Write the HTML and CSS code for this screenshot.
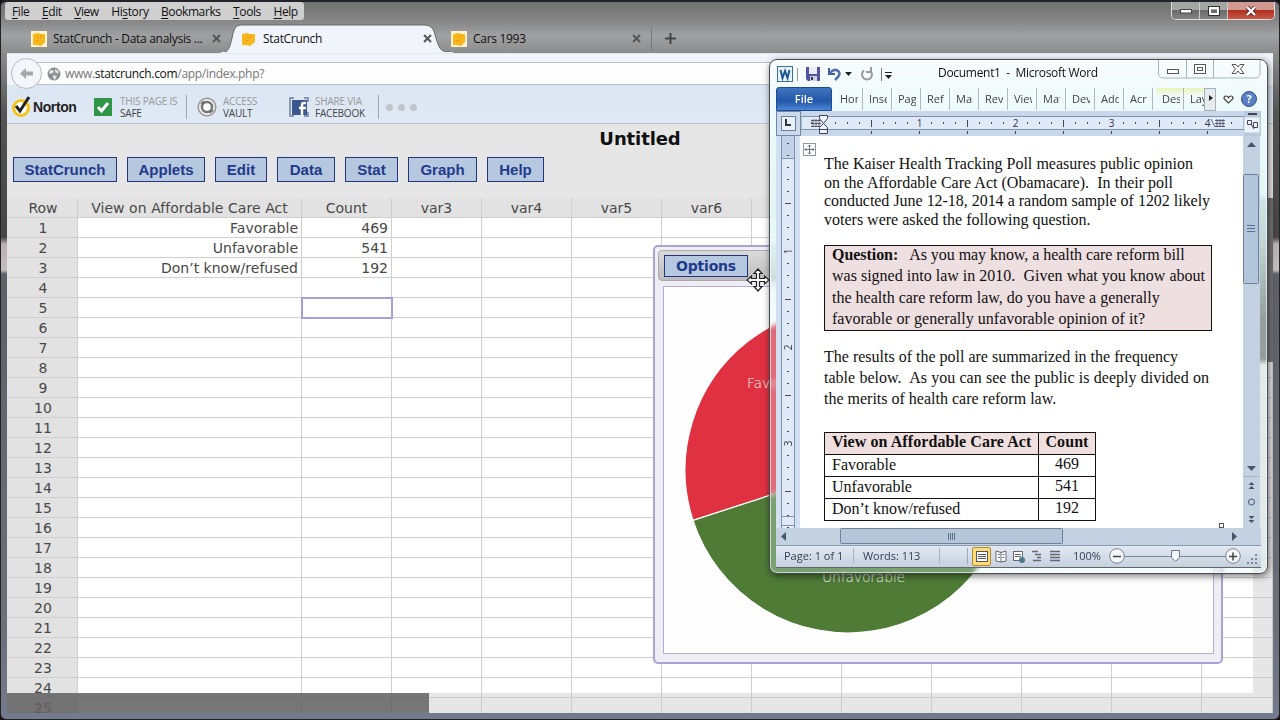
FILE: index.html
```html
<!DOCTYPE html>
<html lang="en">
<head>
  <meta charset="UTF-8">
  <title>StatCrunch</title>
  <link rel="stylesheet" href="styles.css">
</head>
<body>
  <div class="browser">
    <!-- Menu bar -->
    <div class="titlebar">
      <div class="menu">
        <span><u>F</u>ile</span><span><u>E</u>dit</span><span><u>V</u>iew</span><span>Hi<u>s</u>tory</span><span><u>B</u>ookmarks</span><span><u>T</u>ools</span><span><u>H</u>elp</span>
      </div>
      <div class="win-buttons">
        <div class="wb wb-min"><svg width="12" height="6"><rect x=".5" y="1.5" width="11" height="3.5" fill="#fff" stroke="#444"/></svg></div>
        <div class="wb wb-max"><svg width="12" height="10"><rect x="1.5" y="1.5" width="9" height="7" fill="none" stroke="#333" stroke-width="3"/><rect x="2" y="2" width="8" height="6" fill="none" stroke="#fff" stroke-width="2"/></svg></div>
        <div class="wb wb-close"><svg width="12" height="10"><path d="M2 1l8 8M10 1l-8 8" stroke="#522" stroke-width="4"/><path d="M2 1l8 8M10 1l-8 8" stroke="#fff" stroke-width="2.4"/></svg></div>
      </div>
    </div>

    <!-- Tabs -->
    <div class="tabs">
      <div class="tab tab-first">
        <svg class="fav" width="16" height="16"><rect width="16" height="16" fill="#fff3cf"/><path d="M2 3l5-1 3 1 4 0v8l-4 4-4-1-4 0z" fill="#f8b71c"/><path d="M6 5l2 2M10 4v3M5 10l3-1" stroke="#e79a12"/></svg>
        <span>StatCrunch - Data analysis ...</span>
        <svg class="x" width="9" height="9"><path d="M1 1l7 7M8 1l-7 7" stroke="#555" stroke-width="2"/></svg>
      </div>
      <div class="tab-active">
        <svg class="tab-shape" width="232" height="29"><path d="M0 29C8 29 9 22 11 14C13 5 14 1 21 1H203C212 1 213 7 215 14C218 23 219 28 228 28L232 29z" fill="#f1f5fb" stroke="#666"/><path d="M0 29h232" stroke="#f1f5fb" stroke-width="2"/></svg>
        <svg class="fav" width="16" height="16"><path d="M1 3l5-1 3 1 5 0v8l-5 4-4-1-4 0z" fill="#f8b71c"/><path d="M6 5l2 2M10 4v3M5 10l3-1" stroke="#e79a12"/></svg>
        <span>StatCrunch</span>
        <svg class="x" width="9" height="9"><path d="M1 1l7 7M8 1l-7 7" stroke="#555" stroke-width="2"/></svg>
      </div>
      <div class="tab tab-last">
        <svg class="fav" width="16" height="16"><rect width="16" height="16" fill="#fff3cf"/><path d="M2 3l5-1 3 1 4 0v8l-4 4-4-1-4 0z" fill="#f8b71c"/><path d="M6 5l2 2M10 4v3M5 10l3-1" stroke="#e79a12"/></svg>
        <span>Cars 1993</span>
        <svg class="x" width="9" height="9"><path d="M1 1l7 7M8 1l-7 7" stroke="#555" stroke-width="2"/></svg>
      </div>
      <svg class="plus" width="11" height="11"><path d="M5.500 0v11M0 5.500h11" stroke="#444" stroke-width="2"/></svg>
    </div>

    <!-- Address bar -->
    <div class="nav">
      <div class="back"><svg width="15" height="13"><path d="M1 6.500L7 1V4.500H14V8.500H7V12z" fill="#a5a8ac"/></svg></div>
      <div class="url">
        <svg width="14" height="14"><circle cx="7" cy="7" r="6.500" fill="#8b8f94"/><path d="M3 3l3 0 1 2-3 2-2-1zM8 2l4 2-1 3-3-2zM6 8l4 1-2 4-2-2z" fill="#dfe2e5"/></svg>
        <span>www.<b>statcrunch.com</b>/app/index.php?</span>
        <i class="drop"></i>
      </div>
    </div>

    <!-- Norton toolbar -->
    <div class="norton">
      <svg class="check" width="22" height="22"><circle cx="10" cy="12" r="7.500" fill="#fff" stroke="#f1c21b" stroke-width="3"/><path d="M5 10l4 5L18 1" fill="none" stroke="#222" stroke-width="3"/></svg>
      <b class="brand">Norton</b>
      <svg class="safe" width="18" height="18"><rect width="18" height="18" fill="#2f9547"/><path d="M4 9l3.500 4L14 5" fill="none" stroke="#fff" stroke-width="3"/></svg>
      <div class="nt nt-page"><span>THIS PAGE IS</span><em>SAFE</em></div>
      <svg class="vault" width="20" height="20"><circle cx="10" cy="10" r="8.800" fill="#eee" stroke="#999" stroke-width="1.500"/><circle cx="10" cy="10" r="5" fill="#fff" stroke="#777" stroke-width="2.500"/><path d="M4 7l3-3M13 16l3-3" stroke="#666" stroke-width="1.500"/></svg>
      <div class="nt nt-vault"><span>ACCESS</span><em>VAULT</em></div>
      <svg class="fb" width="20" height="20"><path d="M5 1H1v18h4M15 1h4v4M19 15v4h-4" fill="none" stroke="#6e7da0" stroke-width="1.500"/><rect x="3" y="3" width="15" height="15" fill="#3b5790"/><path d="M17 6h-2q-2 0-2 2v10M10 11h7" fill="none" stroke="#fff" stroke-width="2.400"/></svg>
      <div class="nt nt-fb"><span>SHARE VIA</span><em>FACEBOOK</em></div>
      <div class="dots"><i></i><i></i><i></i></div>
    </div>

    <!-- StatCrunch page -->
    <div class="page">
      <h1>Untitled</h1>
      <div class="buttons">
        <button class="b1">StatCrunch</button>
        <button class="b2">Applets</button>
        <button class="b3">Edit</button>
        <button class="b4">Data</button>
        <button class="b5">Stat</button>
        <button class="b6">Graph</button>
        <button class="b7">Help</button>
      </div>
      <table class="sheet">
        <colgroup id="cols"></colgroup>
        <thead><tr id="head"></tr></thead>
        <tbody id="rows"></tbody>
      </table>
      <div class="vtrack"></div>
      <div class="vthumb"></div>
      <div class="htrack"></div>
      <div class="hthumb"></div>
    </div>
  </div>

  <!-- Pie chart window -->
  <div class="dialog">
    <div class="dialog-bar"><button>Options</button></div>
    <div class="chart">
      <svg width="549" height="366">
        <g stroke="#fff" stroke-width="1.200">
          <path d="M184 183H347A163 163 0 0 0 271.600 45.500z" fill="#3b6fb6"/>
          <path d="M184 183L271.600 45.500A163 163 0 0 0 29 233.400z" fill="#e03142"/>
          <path d="M184 183L29 233.400A163 163 0 0 0 347 183z" fill="#4f7b37"/>
        </g>
        <text x="83" y="101">Favorable</text>
        <text x="158" y="295">Unfavorable</text>
      </svg>
    </div>
  </div>

  <!-- Word window -->
  <div class="word">
    <div class="word-title">
      <svg width="120" height="22">
        <rect x="1.500" y="3.500" width="15" height="15" fill="#eaf3fb" stroke="#3c6d9f"/>
        <path d="M4.500 7l2 8 2.500-7 2.500 7 2-8" fill="none" stroke="#1d5792" stroke-width="2"/>
        <path d="M21.500 5v13" stroke="#999"/>
        <path d="M30 4h14v14H32l-2-2z" fill="#5553a0"/><rect x="33" y="4" width="8" height="7" fill="#e9edf7"/><rect x="34" y="13" width="7" height="5" fill="#ccd2e6"/><rect x="35" y="14" width="2" height="3" fill="#334"/>
        <path d="M53 5v6h6" fill="none" stroke="#3d5f9c" stroke-width="2"/><path d="M54 10q4-5 8-2t-3 9" fill="none" stroke="#5572a8" stroke-width="2.500"/>
        <path d="M69 9h7l-3.500 4z" fill="#222"/>
        <path d="M94 7.500a5 5 0 1 1-6 0M95 4v5h-5" fill="none" stroke="#999" stroke-width="2"/>
        <path d="M105.500 5v13" stroke="#777"/><path d="M109 9.500h7" stroke="#222"/><path d="M109 12h7l-3.500 4z" fill="#222"/>
      </svg>
      <span class="caption">Document1&nbsp; -&nbsp; Microsoft Word</span>
      <div class="word-win">
        <svg width="103" height="19"><path d="M.5 0v13q0 5 5 5H97q5 0 5-5V0M28.500 0v18M55.500 0v18" fill="none" stroke="#a8b4bb"/><rect x="9.500" y="9.500" width="11" height="4" fill="#fff" stroke="#555"/><rect x="36.500" y="4.500" width="11" height="9" fill="#fff" stroke="#555"/><rect x="39.500" y="7.500" width="5" height="3" fill="#fff" stroke="#555"/><path d="M74 4.500h4l2 2.500 2-2.500h4L82.500 9l3.500 4.500h-4l-2-2.500-2 2.500h-4L77.500 9z" fill="#fff" stroke="#555"/></svg>
      </div>
    </div>
    <div class="ribbon">
      <div class="file">File</div>
      <div class="rt"><span>Home</span></div><div class="rt"><span>Insert</span></div><div class="rt"><span>Page</span></div><div class="rt"><span>Ref</span></div><div class="rt rt-ma"><span>Mailings</span></div><div class="rt"><span>Rev</span></div><div class="rt"><span>View</span></div><div class="rt rt-ma"><span>Math</span></div><div class="rt"><span>Dev</span></div><div class="rt"><span>Add</span></div><div class="rt"><span>Acr</span></div>
      <div class="rt rt-des"><span>Des</span></div><div class="rt rt-lay"><span>Lay</span></div>
      <div class="more"></div>
      <svg class="heart" width="11" height="9"><path d="M5.500 8L1 3.500Q1 1 3 1t2.500 2.500Q6 1 8 1t2 2.500z" fill="#fff" stroke="#444" stroke-width="1.200"/></svg>
      <div class="help">?</div>
    </div>
    <div class="word-body">
      <div class="hruler">
        <svg id="hruler" width="485" height="25">
          <rect width="485" height="25" fill="#c8d8ea"/>
          <rect x=".5" y=".5" width="24" height="24" fill="#cbd9ea" stroke="#7088a6"/>
          <rect x="5.500" y="5.500" width="14" height="14" fill="#e8f0f8" stroke="#6a80a0"/>
          <path d="M10 8v6h5" fill="none" stroke="#334" stroke-width="2"/>
          <rect x="25" y="5.500" width="443" height="13" fill="#dfe9f7" stroke="#7e93ad"/>
        </svg>
      </div>
      <div class="middle">
        <svg id="vruler" width="24" height="392">
          <rect width="24" height="392" fill="#d3e0f1"/>
          <rect x="5.500" y="-1" width="13" height="400" fill="#dfe9f7" stroke="#7e93ad"/>
          <path d="M6 0h12v22H6z" fill="#c1d1e6"/><path d="M6 22.500h12M6 380.500h12M6 389.500h12" stroke="#7e93ad"/>
        </svg>
        <div class="doc">
          <svg class="anchor" width="13" height="13"><rect x=".5" y=".5" width="12" height="12" fill="#fff" stroke="#8b98a8"/><path d="M6.500 2v9M2 6.500h9M5 3.500l1.500-1.500L8 3.500M5 9.500L6.500 11 8 9.500M3.500 5L2 6.500 3.500 8M9.500 5L11 6.500 9.500 8" fill="none" stroke="#456" stroke-width=".8"/></svg>
          <div class="para p1">
            <p class="w369">The Kaiser Health Tracking Poll measures public opinion</p>
            <p class="w349">on the Affordable Care Act (Obamacare).&nbsp; In their poll</p>
            <p class="w386">conducted June 12-18, 2014 a random sample of 1202 likely</p>
            <p class="w265">voters were asked the following question.</p>
          </div>
          <div class="para question">
            <p class="w352"><b>Question:</b>&nbsp;&nbsp; As you may know, a health care reform bill</p>
            <p class="w373">was signed into law in 2010.&nbsp; Given what you know about</p>
            <p class="w327">the health care reform law, do you have a generally</p>
            <p class="w313">favorable or generally unfavorable opinion of it?</p>
          </div>
          <div class="para p2">
            <p class="w354">The results of the poll are summarized in the frequency</p>
            <p class="w385">table below.&nbsp; As you can see the public is deeply divided on</p>
            <p class="w232">the merits of health care reform law.</p>
          </div>
          <table class="freq">
            <tr><th>View on Affordable Care Act</th><th>Count</th></tr>
            <tr><td>Favorable</td><td>469</td></tr>
            <tr><td>Unfavorable</td><td>541</td></tr>
            <tr><td>Don’t know/refused</td><td>192</td></tr>
          </table>
          <i class="handle"></i>
        </div>
        <div class="vscroll">
          <svg width="17" height="392">
            <path d="M4 11h9l-4.500-5z" fill="#44566e"/>
            <rect x=".5" y="38.500" width="15" height="109" rx="1" fill="#b3c5da" stroke="#6d819c"/>
            <path d="M4 89.500h8M4 92.500h8M4 95.500h8" stroke="#5d7089"/>
            <path d="M4 330h9l-4.500 5z" fill="#44566e"/><path d="M0 340.500h17" stroke="#a5b4c6"/>
            <path d="M5.500 349l3-3 3 3zM5.500 353l3-3 3 3z" fill="#44566e"/>
            <circle cx="8.500" cy="366" r="3" fill="none" stroke="#44566e"/>
            <path d="M5.500 380l3 3 3-3zM5.500 384l3 3 3-3z" fill="#44566e"/>
          </svg>
        </div>
      </div>
      <div class="hscroll">
        <svg width="485" height="17">
          <path d="M10 4v9L5 8.500z" fill="#44566e"/>
          <rect x="64.500" y=".5" width="222" height="15" rx="1" fill="#b5c6d9" stroke="#6d819c"/>
          <path d="M172.500 5v7M174.500 5v7M176.500 5v7M178.500 5v7" stroke="#5d7089"/>
          <path d="M456 4v9l5-4.500z" fill="#44566e"/>
        </svg>
      </div>
      <div class="status">
        <span class="s-page">Page: 1 of 1</span>
        <span class="s-words">Words: 113</span>
        <svg class="views" width="98" height="20">
          <path d="M.5 2v16" stroke="#99a7ba"/>
          <rect x="5.500" y="1.500" width="18" height="18" rx="1.500" fill="#fbdc7c" stroke="#b78a2c"/>
          <rect x="9.500" y="5.500" width="11" height="10" fill="#fff" stroke="#555"/><path d="M11 8.500h8M11 10.500h8M11 12.500h8" stroke="#555"/>
          <path d="M29 5l5 1.500 5-1.500v10l-5 1-5-1zM34 6v10M31 8.500h2M31 11.500h2M35.500 8.500h2M35.500 11.500h2" fill="#fff" stroke="#667"/>
          <rect x="46.500" y="5.500" width="9" height="9" fill="#fff" stroke="#667"/><path d="M48 8.500h6M48 10.500h6" stroke="#667"/><circle cx="55" cy="14" r="3" fill="#4a7a8a"/>
          <path d="M65 5.500h6M68 8.500h6M70 11.500h4M66 14.500h8M83 5.500h10M83 8.500h10M83 11.500h10M83 14.500h10" stroke="#667" stroke-width="1.300"/>
        </svg>
        <span class="zoom">100%</span>
        <svg class="slider" width="132" height="20">
          <path d="M15 10.500h109" stroke="#7a8798"/>
          <circle cx="8" cy="10" r="7.300" fill="#f4f6f9" stroke="#7a8491"/><path d="M4 10.500h8" stroke="#444" stroke-width="1.500"/>
          <circle cx="124" cy="10" r="7.300" fill="#f4f6f9" stroke="#7a8491"/><path d="M120 10.500h8M124 6.500v8" stroke="#444" stroke-width="1.500"/>
          <path d="M62.500 4.500h8v7l-4 4-4-4z" fill="#f4f6f9" stroke="#6f7a88"/>
        </svg>
        <svg class="grip" width="12" height="12"><path d="M9 1h2M9 5h2M9 9h2M5 5h2M5 9h2M1 9h2" stroke="#7a8798" stroke-width="2"/></svg>
      </div>
    </div>
  </div>

  <svg class="cursor" width="24" height="24"><path d="M12 1l4 4.500h-2.500v5h5V8L23 12l-4.500 4v-2.500h-5v5H16L12 23l-4-4.500h2.500v-5h-5V16L1 12l4.500-4v2.500h5v-5H8z" fill="#fff" stroke="#222" stroke-width="1.200"/></svg>

  <script>
    const data = [["Favorable", 469], ["Unfavorable", 541], ["Don’t know/refused", 192]];
    const heads = ["Row", "View on Affordable Care Act", "Count", "var3", "var4", "var5", "var6", "", "", "", "", "", ""];

    document.getElementById("cols").innerHTML = heads.map(() => "<col>").join("");
    document.getElementById("head").innerHTML = heads.map(h => `<th>${h}</th>`).join("");

    let html = "";
    for (let r = 1; r <= 25; r++) {
      html += `<tr><th>${r}</th>`;
      for (let c = 0; c < heads.length - 1; c++) {
        const value = data[r - 1] && c < 2 ? data[r - 1][c] : "";
        html += `<td${r === 5 && c === 1 ? ' class="selected"' : ""}>${value}</td>`;
      }
      html += "</tr>";
    }
    document.getElementById("rows").innerHTML = html;

    // Ruler marks: one inch is 96px, a mark every eighth
    let h = "", v = "";
    for (let i = -1; i <= 34; i++) {
      const x = 47.5 + i * 12;
      if (i % 8 === 0 && i > 0) {
        h += `<text x="${x}" y="16">${i / 8}</text>`;
      } else if (i !== 0 && i !== 33 && x < 466) {
        h += i % 4 === 0 ? `<path d="M${x} 9v7"/>` : `<path d="M${x} 11v2"/>`;
      }
      if (i > 0 && i % 4 === 0) h += `<path d="M${x} 20v3"/>`;
    }
    h += '<path d="M37 8v8M40 8v8M43 8v8M35 9.500h10M35 12.500h10M35 15.500h10" stroke-width=".8"/>';
    h += '<path d="M43.500 4.500h8v3l-4 5-4-5zM47.500 12.500l4 4v6h-8v-6zM43.500 18.500h8" fill="#edf3fa" stroke="#667a94"/>';
    h += '<path d="M435 8l4 8" stroke-width=".8"/><path d="M441 8v8M444 8v8M447 8v8M439 9.500h10M439 12.500h10M439 15.500h10" stroke-width=".8"/>';
    h += '<rect x="468" y="0" width="17" height="25" fill="#b9c9dc" stroke="none"/><path d="M472 3h9" stroke-width="2"/><rect x="468.500" y="6.500" width="15" height="15" fill="#edf3fa"/><path d="M471.500 9.500h4v4h-4zM475 13l3 5M477.500 11.500h4v5h-4z" fill="none"/>';
    for (let i = -1; i < 32; i++) {
      const y = 19.500 + i * 12;
      if (i > 0 && i % 8 === 0) v += `<text transform="translate(15.500 ${y}) rotate(-90)">${i / 8}</text>`;
      else if (y > 0) v += i > 0 && i % 4 === 0 ? `<path d="M9 ${y}h6"/>` : `<path d="M11 ${y}h2"/>`;
    }
    document.getElementById("hruler").innerHTML += `<g class="marks">${h}</g>`;
    document.getElementById("vruler").innerHTML += `<g class="marks">${v}</g>`;
  </script>
</body>
</html>
```
FILE: styles.css
```css
* {
  box-sizing: border-box;
  margin: 0;
  padding: 0;
}
body {
  width: 1280px;
  height: 720px;
  overflow: hidden;
  position: relative;
  background: #111;
  font-family: "Open Sans", "Noto Sans", sans-serif;
  font-size: 12px;
  color: #111;
}
svg {
  display: block;
  flex: none;
}
.browser {
  height: 720px;
  display: flex;
  flex-direction: column;
  padding: 0 6px 6px;
  border: 1px solid #222;
  border-top: 2px solid #23232c;
  border-radius: 6px;
  background: linear-gradient(#707070, #858585 18px, #a0a1a3 34px, #8c8c8c 51px, #555 110px, #444 235px, #b9b0b4 242px, #c5bfc2 268px, #5d6066 272px, #6d717c 640px, #747b8c);
}

/* Menu bar and window buttons */
.titlebar {
  display: flex;
  justify-content: space-between;
  height: 22px;
  margin: 0 -6px;
}
.menu {
  display: flex;
  align-items: center;
  gap: 12.5px;
  width: 299px;
  height: 18px;
  margin-left: 4px;
  padding-left: 7px;
  background: #cfcfcf;
  border-radius: 3px;
  white-space: nowrap;
  letter-spacing: -0.4px;
}
.menu u {
  text-underline-offset: 2px;
}
.win-buttons {
  display: flex;
  height: 18px;
  margin-right: 4px;
  border: 1px solid #ddd;
  border-top: 0;
  border-radius: 0 0 5px 5px;
  overflow: hidden;
}
.wb {
  display: flex;
  align-items: center;
  justify-content: center;
  width: 28px;
  border-right: 1px solid #ccc;
  background: linear-gradient(#a5a5a5 45%, #6a6a6a 50%, #858585);
}
.wb-close {
  width: 46px;
  border: 0;
  background: linear-gradient(#d09a90 45%, #b03020 50%, #c85848);
}

/* Tabs */
.tabs {
  display: flex;
  align-items: center;
  height: 29px;
  padding-left: 24px;
}
.tab,
.tab-active {
  display: flex;
  align-items: center;
  height: 29px;
  white-space: nowrap;
  letter-spacing: -0.3px;
}
.tab .x,
.tab-active .x {
  margin-left: auto;
}
.tab span,
.tab-active span {
  margin-left: 6px;
}
.tab-first {
  width: 190px;
}
.tab-active {
  position: relative;
  width: 198px;
  margin-left: 20px;
  padding-right: 7px;
}
.tab-active > * {
  position: relative;
}
.tab-active .tab-shape {
  position: absolute;
  left: -20px;
  top: 0;
}
.tab-last {
  width: 201px;
  margin-left: 12px;
  height: 24px;
  padding-right: 10px;
  border-right: 1px solid #777;
}
.plus {
  margin-left: 13px;
}

/* Address bar */
.nav {
  display: flex;
  align-items: center;
  height: 32px;
  padding: 9px 0 0 4px;
  background: #f1f5fb;
  border-top: 1px solid #e4e8ee;
}
.back {
  display: flex;
  align-items: center;
  justify-content: center;
  flex: none;
  width: 31px;
  height: 31px;
  margin: -5px -9px -4px 0;
  border: 1px solid #b5bbc4;
  border-radius: 50%;
  background: #f3f6fa;
  z-index: 1;
}
.url {
  display: flex;
  align-items: center;
  width: 900px;
  height: 23px;
  margin-top: -1px;
  padding-left: 13px;
  gap: 4px;
  border: 1px solid #b9c2cc;
  background: #fdfdfe;
  color: #777;
  letter-spacing: -0.3px;
}
.url span {
  width: 202px;
  white-space: nowrap;
}
.url b {
  color: #111;
  font-weight: 500;
}
.drop {
  margin-left: 502px;
  border: 4px solid transparent;
  border-top: 5px solid #888;
}

/* Norton toolbar */
.norton {
  display: flex;
  align-items: center;
  height: 39px;
  padding-left: 4px;
  background: linear-gradient(#dbe6f3, #e0e9f4);
  border-bottom: 1px solid #b9c6d6;
  line-height: 12px;
  font-size: 10px;
}
.norton > * {
  margin-top: 6px;
}
.norton .brand {
  width: 44px;
  margin-right: 17px;
  font: bold 14px "Liberation Sans", sans-serif;
  letter-spacing: -0.4px;
  color: #222;
}
.nt {
  height: 24px;
  letter-spacing: -0.2px;
}
.nt span,
.nt em {
  display: block;
  font-style: normal;
  white-space: nowrap;
  color: #444;
}
.nt span {
  color: #999;
}
.nt-page {
  margin-left: 8px;
  width: 67px;
  border-right: 1px solid #9aa7b8;
}
.vault {
  margin-left: 10px;
}
.nt-vault {
  margin-left: 6px;
  width: 66px;
}
.nt-fb {
  margin-left: 6px;
  width: 64px;
  border-right: 1px solid #9aa7b8;
}
.dots {
  display: flex;
  gap: 5px;
  margin-left: 7px;
}
.dots i {
  width: 7px;
  height: 7px;
  border-radius: 50%;
  background: #c2c6cc;
}

/* StatCrunch page */
.page {
  position: relative;
  flex: 1;
  min-height: 0;
  overflow: hidden;
  background: #e6e6e6;
}
h1 {
  height: 33px;
  padding-top: 4px;
  font: bold 18px/22px "DejaVu Sans", sans-serif;
  letter-spacing: -0.1px;
  text-align: center;
}
.buttons {
  display: flex;
  gap: 10px;
  padding-left: 6px;
  height: 41px;
}
button {
  height: 25px;
  border: 1px solid #23357f;
  background: #b6c8df;
  color: #213a8c;
  font: bold 15px "Liberation Sans", sans-serif;
  white-space: nowrap;
}
.b1 { width: 104px; }
.b2 { width: 78px; }
.b3 { width: 52px; }
.b4 { width: 58px; }
.b5 { width: 53px; }
.b6 { width: 69px; }
.b7 { width: 57px; }
.sheet {
  table-layout: fixed;
  border-collapse: separate;
  border-spacing: 0;
  width: 1266px;
  font: 14px/18px "DejaVu Sans", sans-serif;
  color: #484848;
}
.sheet th,
.sheet td {
  height: 20px;
  padding-top: 1px;
  border-right: 1px solid #cfcfcf;
  border-bottom: 1px solid #cfcfcf;
  white-space: nowrap;
}
.sheet th {
  background: #e2e2e2;
  font-weight: normal;
  text-align: center;
}
.sheet thead th:nth-child(2) {
  letter-spacing: 0.05px;
}
.sheet th:first-child {
  padding-left: 2px;
}
.sheet td {
  background: #fff;
  padding-right: 3px;
  text-align: right;
}
.sheet col { width: 90px; }
.sheet col:first-child { width: 71px; }
.sheet col:nth-child(2) { width: 224px; }
.sheet col:last-child { width: 71px; }
.sheet td.selected {
  outline: 2px solid #a79fdc;
  outline-offset: -1px;
}
.vtrack,
.htrack,
.vthumb,
.hthumb {
  position: absolute;
  background: rgba(200, 200, 200, 0.45);
}
.vtrack {
  right: 0;
  top: 74px;
  bottom: 20px;
  width: 20px;
}
.htrack {
  left: 0;
  right: 0;
  bottom: 0;
  height: 20px;
}
.vthumb,
.hthumb {
  background: rgba(80, 80, 80, 0.75);
}
.vthumb {
  right: 0;
  top: 74px;
  width: 20px;
  height: 164px;
}
.hthumb {
  left: 0;
  bottom: 0;
  width: 422px;
  height: 20px;
}

/* Chart window */
.dialog {
  position: absolute;
  left: 653px;
  top: 245px;
  width: 570px;
  height: 419px;
  padding: 3px 7px 7px 8px;
  border: 2px solid #a9a2d6;
  border-radius: 5px;
  background: #efeef4;
}
.dialog-bar {
  height: 31px;
  margin: 0 -5px 5px;
  padding: 4px 5px;
  border: 1px solid #aaa;
  border-radius: 4px;
  background: linear-gradient(#dadada, #bdbdbd);
}
.dialog-bar button {
  display: block;
  width: 84px;
  height: 22px;
  font: bold 14px "DejaVu Sans", sans-serif;
  letter-spacing: -0.2px;
}
.chart {
  height: 368px;
  border: 1px solid #b3add9;
  background: #fefefe;
}
.chart text {
  fill: #eef1ea;
  font: 200 14px "DejaVu Sans", sans-serif;
  letter-spacing: -0.2px;
}

/* Word window */
.word {
  position: absolute;
  left: 769px;
  top: 59px;
  width: 499px;
  height: 515px;
  padding: 0 6px 6px;
  border: 1px solid #454b4e;
  border-radius: 8px;
  background: linear-gradient(#f8fcfd, #ecfafb 60px, rgba(220, 248, 248, 0.75) 180px, rgba(220, 248, 248, 0.3) 260px);
  backdrop-filter: blur(2px);
  box-shadow: inset 0 0 0 1px rgba(255, 255, 255, 0.6), 1px 2px 7px rgba(0, 0, 0, 0.55);
}
.word-title {
  display: flex;
  height: 27px;
}
.word-title > svg {
  margin-top: 3px;
}
.caption {
  margin: 4px 0 0 42px;
  width: 162px;
  white-space: nowrap;
  letter-spacing: -0.3px;
}
.word-win {
  margin-left: 58px;
}
.ribbon {
  display: flex;
  align-items: center;
  height: 24px;
  font-size: 11px;
  color: #444;
}
.file {
  width: 56px;
  height: 24px;
  border: 1px solid #1e4a94;
  border-radius: 3px 3px 0 0;
  background: linear-gradient(#3f74c0, #2458a8 60%, #4a86d8);
  color: #fff;
  font-weight: 600;
  line-height: 22px;
  text-align: center;
}
.rt {
  width: 29px;
  height: 22px;
  padding-left: 6px;
  border-right: 1px solid #b0b8bd;
  line-height: 22px;
}
.file + .rt {
  width: 31px;
  padding-left: 8px;
}
.rt span {
  display: block;
  width: 18px;
  overflow: hidden;
}
.rt-ma span {
  width: 17px;
}
.rt-des {
  margin-left: 3px;
  width: 28px;
  padding-left: 6px;
  background: linear-gradient(#eaf3b8, transparent 8px);
}
.rt-lay {
  width: 20px;
  border: 0;
  background: linear-gradient(#eaf3b8, transparent 8px);
}
.rt-lay span {
  width: 14px;
}
.more {
  width: 12px;
  height: 23px;
  border: 1px solid #aab0b8;
  background: #e6ebf0;
}
.more::before {
  content: "";
  display: block;
  margin: 6px 0 0 4px;
  border: 3px solid transparent;
  border-left: 4px solid #222;
}
.heart {
  margin-left: 7px;
}
.help {
  width: 16px;
  height: 16px;
  margin-left: 7px;
  border: 1px solid #34528e;
  border-radius: 50%;
  background: #5a7fc4;
  color: #fff;
  font-weight: bold;
  line-height: 14px;
  text-align: center;
}
.word-body {
  width: 485px;
  height: 457px;
  border-bottom: 1px solid #666;
}
.hruler {
  height: 25px;
}
.marks path {
  stroke: #445;
}
.marks text {
  fill: #334;
  font-size: 10px;
  text-anchor: middle;
}
.middle {
  display: flex;
  height: 392px;
}
.doc {
  position: relative;
  width: 443px;
  padding: 19px 0 0 24px;
  background: #fff;
  font: 16px/18.5px "Liberation Serif", serif;
  color: #111;
}
.anchor {
  position: absolute;
  left: 3px;
  top: 7px;
}
.para p {
  white-space: nowrap;
  text-align-last: justify;
}
.p1 {
  height: 90px;
}
.question {
  width: 388px;
  height: 86px;
  margin-bottom: 15px;
  padding-left: 7px;
  border: 1px solid #111;
  background: #eedfe1;
  line-height: 21.3px;
}
.question p {
  position: relative;
  top: -2px;
}
.p2 {
  height: 86px;
  line-height: 21.2px;
}
.w369 { width: 369px; }
.w349 { width: 349px; }
.w386 { width: 386px; }
.w265 { width: 265px; }
.w352 { width: 352px; }
.w373 { width: 373px; }
.w327 { width: 327px; }
.w313 { width: 313px; }
.w354 { width: 354px; }
.w385 { width: 385px; }
.w232 { width: 232px; }
.w386,
.w352 {
  letter-spacing: -0.05px;
}
.freq {
  width: 272px;
  table-layout: fixed;
  border-collapse: collapse;
}
.freq th,
.freq td {
  height: 22px;
  padding: 0 0 4px 7px;
  border: 1px solid #111;
  line-height: 17px;
  text-align: left;
  white-space: nowrap;
}
.freq td:first-child {
  padding-bottom: 2px;
}
.freq th {
  background: #f0dfdf;
  letter-spacing: 0.08px;
}
.freq td + td,
.freq th + th {
  width: 57px;
  padding-left: 0;
  text-align: center;
}
.handle {
  position: absolute;
  right: 19px;
  bottom: 0;
  width: 5px;
  height: 5px;
  border: 1px solid #555;
}
.vscroll,
.hscroll {
  background: #c3d1e1;
}
.hscroll {
  height: 17px;
}
.status {
  display: flex;
  align-items: center;
  height: 22px;
  padding: 0 0 2px 8px;
  border-top: 1px solid #8a9bb0;
  background: linear-gradient(#e3e9f2, #c5d0df);
  font-size: 11px;
  color: #333f55;
  white-space: nowrap;
}
.status span {
  flex: none;
}
.s-page {
  width: 70px;
  border-right: 1px solid #a5b0c0;
}
.s-words {
  width: 77px;
  margin-left: 9px;
  border-right: 1px solid #a5b0c0;
  letter-spacing: -0.05px;
}
.views {
  margin-left: 27px;
}
.zoom {
  width: 28px;
  margin-left: 8px;
}
.slider {
  margin-left: 8px;
}
.grip {
  margin: 8px 0 0 5px;
}
.cursor {
  position: absolute;
  left: 746px;
  top: 268px;
}
```
